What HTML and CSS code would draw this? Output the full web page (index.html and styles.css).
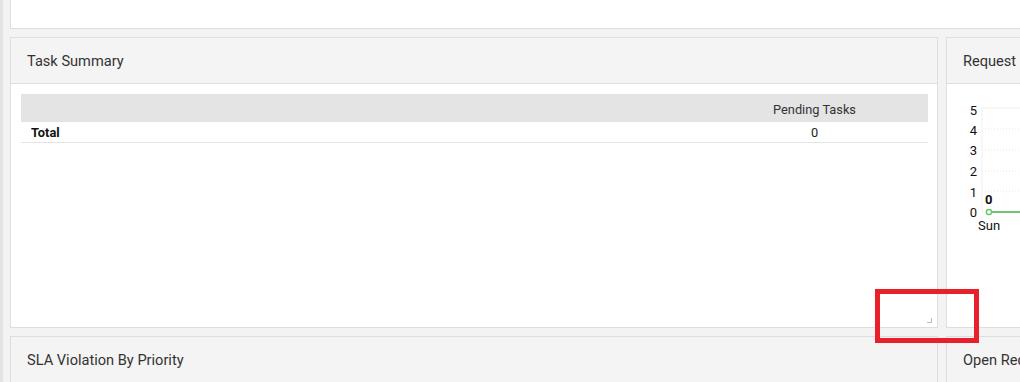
FILE: index.html
```html
<!DOCTYPE html>
<html>
<head>
<meta charset="utf-8">
<link rel="stylesheet" href="styles.css">
</head>
<body>
<div class="strip"></div>
<div class="main">
  <div class="panel top-panel"></div>
  <div class="row">
    <div class="panel task">
      <div class="ph">Task Summary</div>
      <div class="pb">
        <table class="tbl">
          <thead><tr><th class="c1"></th><th class="c2">Pending Tasks</th></tr></thead>
          <tbody><tr><td class="c1 lbl">Total</td><td class="c2">0</td></tr></tbody>
        </table>
        <span class="handle"></span>
      </div>
    </div>
    <div class="panel req">
      <div class="ph">Request Summary</div>
      <div class="pb chart">
        <svg width="80" height="160" viewBox="0 0 80 160" class="svg">
          <g class="grid">
            <line x1="35" y1="24" x2="80" y2="24" class="solid"/>
            <line x1="35" y1="45" x2="80" y2="45"/>
            <line x1="35" y1="66" x2="80" y2="66"/>
            <line x1="35" y1="87" x2="80" y2="87"/>
            <line x1="35" y1="107" x2="80" y2="107"/>
            <line x1="35" y1="24" x2="35" y2="128" class="solid"/>
          </g>
          <g class="ylab">
            <text x="30" y="31">5</text>
            <text x="30" y="51">4</text>
            <text x="30" y="71">3</text>
            <text x="30" y="92">2</text>
            <text x="30" y="113">1</text>
            <text x="30" y="133">0</text>
          </g>
          <line x1="43" y1="128" x2="80" y2="128" class="gline"/>
          <circle cx="42" cy="128" r="2.6" class="gdot"/>
          <text x="38" y="120" class="vlab">0</text>
          <text x="31" y="146" class="xlab">Sun</text>
        </svg>
      </div>
    </div>
  </div>
  <div class="row">
    <div class="panel task"><div class="ph">SLA Violation By Priority</div></div>
    <div class="panel req"><div class="ph">Open Requests</div></div>
  </div>
</div>
<div class="mark"></div>
</body>
</html>
```
FILE: styles.css
```css
html, body {
  margin: 0;
  padding: 0;
  height: 100%;
  overflow: hidden;
}
body {
  display: flex;
  background: #f3f3f3;
  font-family: Roboto, "Liberation Sans", Arial, sans-serif;
  color: #333;
}
.strip {
  width: 3px;
  flex: none;
  background: #e3e3e3;
}
.main {
  flex: 1;
  padding-left: 7px;
  display: flex;
  flex-direction: column;
  gap: 8px;
  min-width: 0;
}
.panel {
  border: 1px solid #dedede;
  background: #fff;
  box-sizing: border-box;
}
.top-panel {
  height: 29px;
  flex: none;
  border-top: none;
  margin-right: -20px;
}
.row {
  display: flex;
  gap: 8px;
  flex: none;
}
.task {
  width: 928px;
  flex: none;
}
.req {
  width: 200px;
  flex: none;
}
.ph {
  height: 46px;
  background: #f4f4f4;
  border-bottom: 1px solid #dedede;
  box-sizing: border-box;
  padding-left: 16px;
  font-size: 14.6px;
  line-height: 46px;
  color: #333;
  white-space: nowrap;
  overflow: hidden;
}
.pb {
  height: 243px;
  padding: 10px 9px 10px 10px;
  box-sizing: border-box;
  position: relative;
}
.tbl {
  width: 100%;
  border-collapse: collapse;
  font-size: 12.8px;
}
.tbl th {
  background: #e4e4e4;
  height: 28px;
  font-weight: normal;
  color: #333;
  padding: 0;
  vertical-align: middle;
  padding-top: 2px;
  box-sizing: border-box;
}
.tbl td {
  height: 20px;
  border-bottom: 1px solid #e4e4e4;
  padding: 0;
  color: #222;
}
.tbl .c2 {
  width: 227px;
  text-align: center;
}
.tbl .lbl {
  font-weight: bold;
  padding-left: 10px;
  color: #111;
}
.handle {
  position: absolute;
  right: 5px;
  bottom: 4px;
  width: 4px;
  height: 4px;
  border-right: 1px solid #bbb;
  border-bottom: 1px solid #bbb;
}
.chart {
  padding: 0;
}
.svg {
  display: block;
}
.grid line {
  stroke: #e6e6e6;
  stroke-width: 1;
  stroke-dasharray: 1 2;
}
.grid line.solid {
  stroke: #f0f0f0;
  stroke-dasharray: none;
}
.ylab text {
  font-size: 13px;
  text-anchor: end;
  fill: #111;
}
.gline {
  stroke: #6cc76c;
  stroke-width: 2;
}
.gdot {
  fill: #fff;
  stroke: #6cc76c;
  stroke-width: 1.5;
}
.vlab {
  font-size: 13px;
  font-weight: bold;
  fill: #111;
}
.xlab {
  font-size: 13px;
  fill: #111;
}
.mark {
  position: absolute;
  left: 875px;
  top: 289px;
  width: 104px;
  height: 54px;
  box-sizing: border-box;
  border: 5px solid #e8202a;
}
```
